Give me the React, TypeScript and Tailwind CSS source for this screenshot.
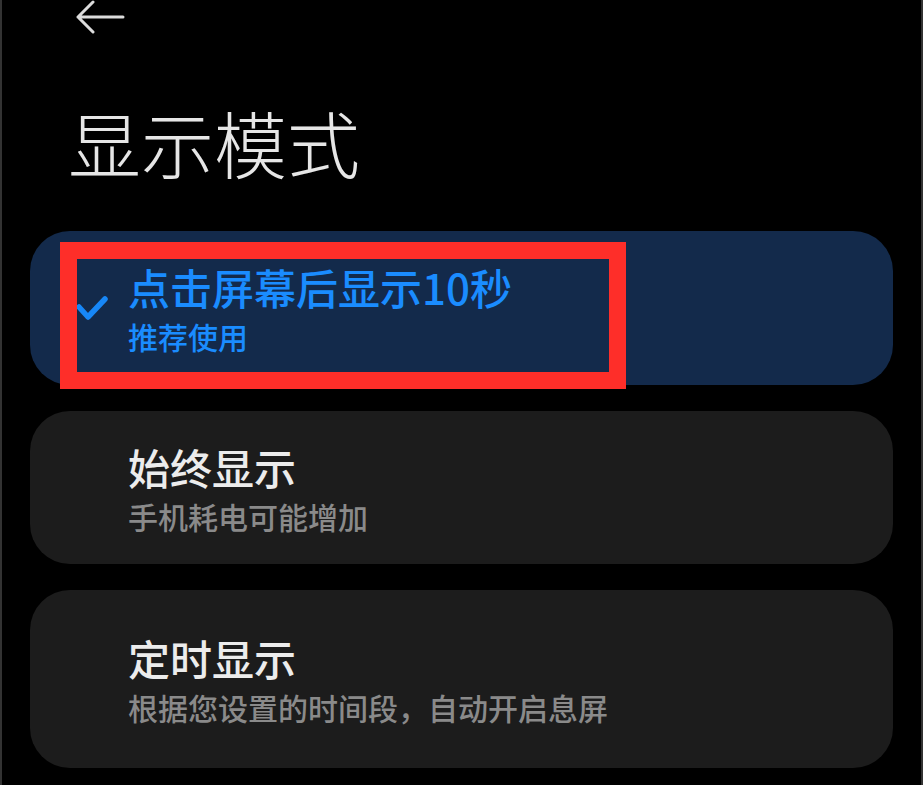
const options = [
  { title: "点击屏幕后显示10秒", desc: "推荐使用", selected: true, height: "h-[154px]" },
  { title: "始终显示", desc: "手机耗电可能增加", selected: false, height: "h-[153px]" },
  { title: "定时显示", desc: "根据您设置的时间段，自动开启息屏", selected: false, height: "h-[178px]" },
];

function BackArrow() {
  return (
    <svg width="50" height="34" viewBox="0 0 50 34" fill="none">
      <path
        d="M3 17H48M18 2L3 17L18 32"
        stroke="#dcdcdc"
        strokeWidth="3"
        strokeLinecap="round"
        strokeLinejoin="round"
      />
    </svg>
  );
}

function Check() {
  return (
    <svg width="34" height="28" viewBox="0 0 34 28" fill="none">
      <path
        d="M4 13L13 23L30 5"
        stroke="#1787f7"
        strokeWidth="5.5"
        strokeLinecap="round"
        strokeLinejoin="round"
      />
    </svg>
  );
}

export default function App() {
  return (
    <div className="h-[785px] overflow-hidden bg-black border-x-2 border-[#333333] font-['Noto_Sans_CJK_SC','Noto_Sans',sans-serif]">
      <div className="h-[34px] pl-[73px]">
        <BackArrow />
      </div>
      <h1 className="ml-[66px] mt-[71px] text-[73px] leading-none font-light text-[#e6e6e6]">
        显示模式
      </h1>

      <div className="mx-[28px] mt-[53px] flex flex-col gap-[26px]">
        {options.map((o) => (
          <div
            key={o.title}
            className={`relative flex items-center rounded-[40px] pl-[45px] ${o.height} ${
              o.selected ? "bg-[#132a4b]" : "bg-[#1c1c1c]"
            }`}
          >
            <div className="w-[53px] flex items-center">{o.selected && <Check />}</div>
            <div className="flex flex-col">
              <span
                className={`text-[42px] leading-[50px] font-medium ${
                  o.selected ? "text-[#1a8cff]" : "text-[#ececec]"
                }`}
              >
                {o.title}
              </span>
              <span
                className={`mt-[6px] text-[30px] leading-[36px] font-medium ${
                  o.selected ? "text-[#1a8cff]" : "text-[#8a8a8a]"
                }`}
              >
                {o.desc}
              </span>
            </div>
            {o.selected && (
              <div className="absolute left-[30px] top-[11px] w-[566px] h-[147px] border-[17px] border-[#fe2e29]" />
            )}
          </div>
        ))}
      </div>
    </div>
  );
}
